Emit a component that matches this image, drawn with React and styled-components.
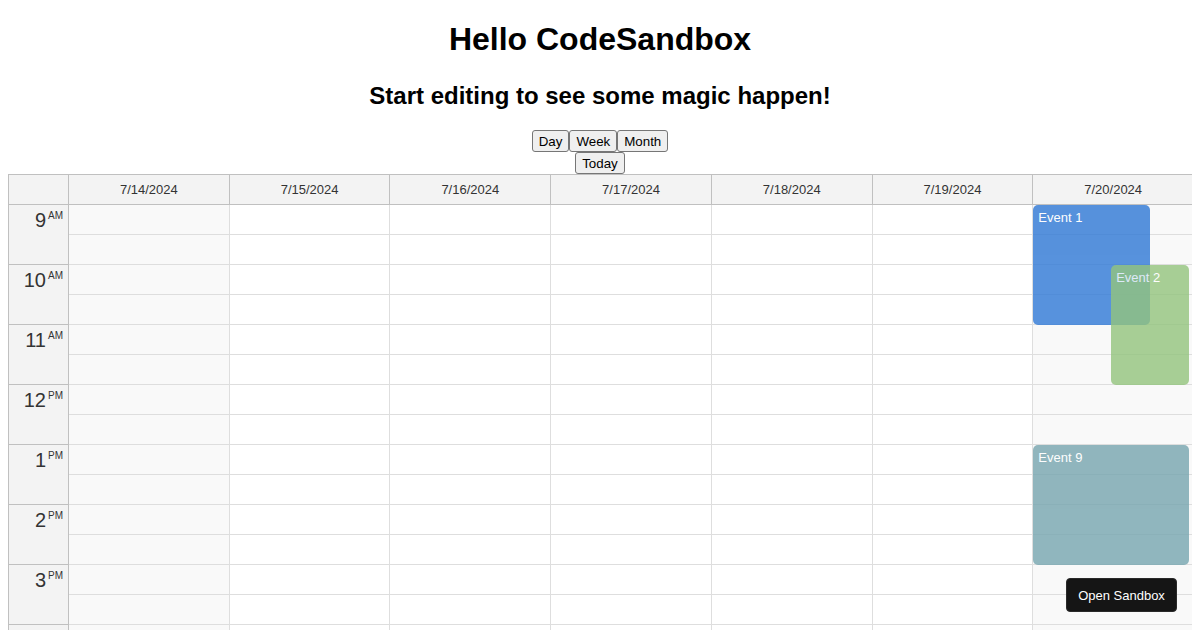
import styled, { createGlobalStyle } from "styled-components";

const days = [
  { date: "7/14/2024", weekend: true },
  { date: "7/15/2024", weekend: false },
  { date: "7/16/2024", weekend: false },
  { date: "7/17/2024", weekend: false },
  { date: "7/18/2024", weekend: false },
  { date: "7/19/2024", weekend: false },
  { date: "7/20/2024", weekend: true },
];

const hours = [9, 10, 11, 12, 13, 14, 15, 16, 17];

const events = [
  { id: 1, day: 6, text: "Event 1", start: 9, end: 11, color: "#2e78d6", left: 0, width: 75 },
  { id: 2, day: 6, text: "Event 2", start: 10, end: 12, color: "#93c47d", left: 50, width: 50 },
  { id: 9, day: 6, text: "Event 9", start: 13, end: 15, color: "#76a5af", left: 0, width: 100 },
];

const HOUR = 60;
const FIRST_HOUR = 9;

function hourLabel(h) {
  const n = h % 12 === 0 ? 12 : h % 12;
  return { n, suffix: h < 12 ? "AM" : "PM" };
}

export default function App() {
  return (
    <>
      <GlobalStyle />
      <Page>
        <Title>Hello CodeSandbox</Title>
        <Subtitle>Start editing to see some magic happen!</Subtitle>

        <Toolbar>
          <Button>Day</Button>
          <Button>Week</Button>
          <Button>Month</Button>
        </Toolbar>
        <Toolbar>
          <Button>Today</Button>
        </Toolbar>

        <Calendar>
          <HeaderRow>
            <Corner />
            {days.map((d, i) => (
              <HeaderCell key={d.date} $last={i === days.length - 1}>
                {d.date}
              </HeaderCell>
            ))}
          </HeaderRow>

          <Body>
            <TimeColumn>
              {hours.map((h) => {
                const { n, suffix } = hourLabel(h);
                return (
                  <TimeCell key={h}>
                    {n}
                    <Minutes>{suffix}</Minutes>
                  </TimeCell>
                );
              })}
            </TimeColumn>

            {days.map((d, i) => (
              <DayColumn key={d.date} $last={i === days.length - 1}>
                {hours.map((h) => (
                  <div key={h}>
                    <Slot $weekend={d.weekend} />
                    <Slot $weekend={d.weekend} />
                  </div>
                ))}
                <EventLayer>
                  {events
                    .filter((e) => e.day === i)
                    .map((e) => (
                      <Event
                        key={e.id}
                        $color={e.color}
                        $top={(e.start - FIRST_HOUR) * HOUR}
                        $height={(e.end - e.start) * HOUR}
                        $left={e.left}
                        $width={e.width}
                      >
                        {e.text}
                      </Event>
                    ))}
                </EventLayer>
              </DayColumn>
            ))}
          </Body>
        </Calendar>
      </Page>

      <SandboxButton>Open Sandbox</SandboxButton>
    </>
  );
}

const GlobalStyle = createGlobalStyle`
  html {
    overflow: hidden;
  }
  body {
    margin: 8px;
    font-family: "Liberation Sans", Arial, sans-serif;
    color: #000;
  }
`;

const Page = styled.div`
  text-align: center;
`;

const Title = styled.h1`
  font-size: 32px;
  font-weight: bold;
  margin: 13px 0 24px;
`;

const Subtitle = styled.h2`
  font-size: 24px;
  font-weight: bold;
  margin: 0 0 20px;
`;

const Toolbar = styled.div`
  display: flex;
  justify-content: center;
`;

const Button = styled.button`
  height: 22px;
  padding: 1px 6px;
  font-family: "Liberation Sans", Arial, sans-serif;
  font-size: 13.33px;
  color: #000;
  background: #efefef;
  border: 1px solid #767676;
  border-radius: 3px;
`;

const Calendar = styled.div`
  width: calc(100% + 1px);
  border-left: 1px solid #c0c0c0;
  border-top: 1px solid #c0c0c0;
  text-align: left;
  color: #333;
`;

const HeaderRow = styled.div`
  display: flex;
  height: 30px;
`;

const Corner = styled.div`
  box-sizing: border-box;
  width: 60px;
  flex: none;
  background: #f3f3f3;
  border-right: 1px solid #c0c0c0;
  border-bottom: 1px solid #c0c0c0;
`;

const HeaderCell = styled.div`
  box-sizing: border-box;
  flex: 1 1 0;
  min-width: 0;
  display: flex;
  align-items: center;
  justify-content: center;
  font-size: 13px;
  background: #f3f3f3;
  border-right: 1px solid #c0c0c0;
  border-bottom: 1px solid #c0c0c0;
`;

const Body = styled.div`
  display: flex;
`;

const TimeColumn = styled.div`
  width: 60px;
  flex: none;
`;

const TimeCell = styled.div`
  box-sizing: border-box;
  height: 60px;
  padding: 4px 3px 0 0;
  text-align: right;
  font-size: 20px;
  line-height: 23px;
  background: #f3f3f3;
  border-right: 1px solid #c0c0c0;
  border-bottom: 1px solid #c0c0c0;
`;

const Minutes = styled.span`
  font-size: 10px;
  line-height: 10px;
  vertical-align: super;
  padding: 0 2px;
`;

const DayColumn = styled.div`
  box-sizing: border-box;
  position: relative;
  flex: 1 1 0;
  min-width: 0;
  border-right: 1px solid ${(p) => (p.$last ? "#c0c0c0" : "#dedede")};
`;

const Slot = styled.div`
  height: 29px;
  background: ${(p) => (p.$weekend ? "#f9f9f9" : "#ffffff")};
  border-bottom: 1px solid #dedede;
`;

const EventLayer = styled.div`
  position: absolute;
  top: 0;
  bottom: 0;
  left: 0;
  right: 4px;
`;

const Event = styled.div`
  position: absolute;
  box-sizing: border-box;
  top: ${(p) => p.$top}px;
  height: ${(p) => p.$height}px;
  left: ${(p) => p.$left}%;
  width: ${(p) => p.$width}%;
  padding: 5px;
  font-size: 13px;
  line-height: 15px;
  color: #fff;
  background: ${(p) => p.$color};
  opacity: 0.8;
  border-radius: 5px;
  overflow: hidden;
`;

const SandboxButton = styled.button`
  position: fixed;
  right: 23px;
  bottom: 18px;
  width: 111px;
  height: 34px;
  font-family: "Liberation Sans", Arial, sans-serif;
  font-size: 13px;
  color: #fff;
  background: #151515;
  border: 1px solid #2a2a2a;
  border-radius: 4px;
`;
